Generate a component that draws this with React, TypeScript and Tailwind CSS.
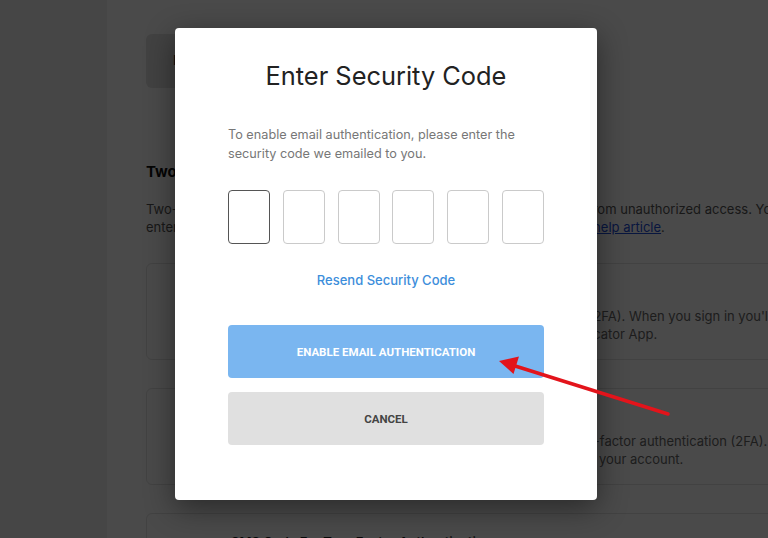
import React from "react";

const font = { fontFamily: "Inter, 'Noto Sans', sans-serif" };

// Background settings page, dimmed by the modal overlay
function SettingsPage() {
  return (
    <div className="flex h-[538px] w-[768px] overflow-hidden bg-white" style={font}>
      <aside className="w-[107px] shrink-0 bg-[#f1f1f1]" />
      <main className="flex-1 pl-[39px] pt-[34px]">
        <div className="flex h-[54px] w-[170px] items-center rounded-md bg-[#e2e2e2] px-[27px] text-[13px] font-medium text-[#333]">
          Back
        </div>

        <h2 className="mt-[74px] text-[15px] font-bold leading-[20px] text-[#111]">
          Two-Factor Authentication
        </h2>
        <div className="mt-[18px] whitespace-nowrap text-[13px] leading-[18px] text-[#555]">
          <p>Two-factor authentication adds an extra layer of security to protect you from unauthorized access. You can</p>
          <p>
            enter a code sent by email or SMS, or use an app. Read more in our new{" "}
            <span className="text-[#1d4ed8] underline">help article</span>.
          </p>
        </div>

        <div className="mt-[27px] flex flex-col gap-[28px]">
          <Card
            title="Authenticator App"
            lines={[
              "Use your authenticator apps for two-factor authentication (2FA). When you sign in you'll",
              "be asked to enter the security code shown in your Authenticator App.",
            ]}
          />
          <Card
            title="Email Code"
            lines={[
              "Use a security code sent by mail as the second step of two-factor authentication (2FA).",
              "You shall need to type in this code every time you sign in to your account.",
            ]}
          />
          <Card title="SMS Code For Two-Factor Authentication" lines={[]} />
        </div>
      </main>
    </div>
  );
}

function Card({ title, lines }: { title: string; lines: string[] }) {
  return (
    <div className="h-[97px] w-[700px] shrink-0 rounded-md border border-[#e3e3e3] pl-[84px] pt-[19px]">
      <h3 className="text-[13px] font-semibold leading-[18px] text-[#222]">{title}</h3>
      <div className="mt-[6px] whitespace-nowrap text-[13px] leading-[18px] text-[#666]">
        {lines.map((l) => (
          <p key={l}>{l}</p>
        ))}
      </div>
    </div>
  );
}

function CodeInputs() {
  return (
    <div className="mt-[27px] flex justify-between">
      {Array(6)
        .fill(0)
        .map((_, i) => (
          <div
            key={i}
            className={`h-[54px] w-[42px] rounded-[4px] border ${i === 0 ? "border-[#555]" : "border-[#cacaca]"}`}
          />
        ))}
    </div>
  );
}

function SecurityCodeModal() {
  return (
    <div className="w-[422px] rounded-[4px] bg-white px-[53px] pb-[55px] pt-[32px] shadow-[0_8px_30px_rgba(0,0,0,0.45)]" style={font}>
      <h1 className="text-center text-[25.4px] font-normal leading-[32px] text-[#222]">Enter Security Code</h1>
      <p className="mt-[33px] text-[12.7px] leading-[19px] text-[#777]">
        To enable email authentication, please enter the security code we emailed to you.
      </p>
      <CodeInputs />
      <p className="mt-[26px] text-center text-[13px] font-medium leading-[20px] text-[#3d8edb]">Resend Security Code</p>
      <button
        className="mt-[35px] flex h-[53px] w-full items-center justify-center rounded-[4px] bg-[#7ab6f0] pt-[3px] text-[11.5px] font-bold text-white"
        style={{ fontFamily: "Roboto, sans-serif" }}
      >
        ENABLE EMAIL AUTHENTICATION
      </button>
      <button
        className="mt-[14px] flex h-[53px] w-full items-center justify-center rounded-[4px] bg-[#e0e0e0] pt-[3px] text-[11.5px] font-bold text-[#444]"
        style={{ fontFamily: "Roboto, sans-serif" }}
      >
        CANCEL
      </button>
    </div>
  );
}

function RedArrow() {
  return (
    <svg className="pointer-events-none absolute left-0 top-0" width="768" height="538">
      <line x1="668" y1="414" x2="512" y2="365" stroke="#e3141b" strokeWidth="3.5" strokeLinecap="round" />
      <polygon points="499,361 519,356.5 513.5,374" fill="#e3141b" />
    </svg>
  );
}

export default function App() {
  return (
    <div className="relative h-[538px] w-[768px] overflow-hidden">
      <SettingsPage />
      <div className="absolute inset-0 flex items-start justify-center bg-black/[0.71] pl-[4px] pt-[28px]">
        <SecurityCodeModal />
      </div>
      <RedArrow />
    </div>
  );
}
